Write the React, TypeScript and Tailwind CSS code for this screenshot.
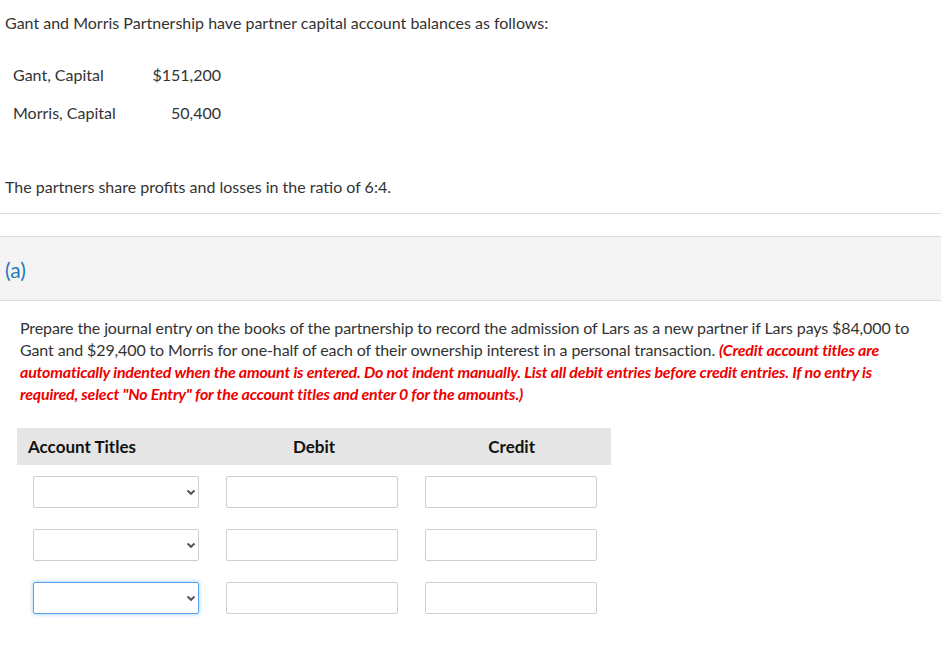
import React from 'react';

const balances = [
  { name: 'Gant, Capital', amount: '$151,200' },
  { name: 'Morris, Capital', amount: '50,400' },
];

const rows = [0, 1, 2];

const Chevron = () => (
  <svg width="10" height="10" viewBox="0 0 10 10" className="text-[#555]">
    <path d="M1.5 3.5 L5 6.8 L8.5 3.5" fill="none" stroke="currentColor" strokeWidth="2" />
  </svg>
);

export default function App() {
  return (
    <div className="min-h-screen bg-white text-[#333] text-[16px] leading-[22px]" style={{ fontFamily: 'Lato, "Open Sans", sans-serif' }}>
      <p className="px-[5px] pt-3">Gant and Morris Partnership have partner capital account balances as follows:</p>

      {/* capital balances */}
      <div className="mt-[30px] pl-[13px] flex flex-col gap-4">
        {balances.map((b) => (
          <div key={b.name} className="flex">
            <span className="w-[130px]">{b.name}</span>
            <span className="w-[78px] text-right">{b.amount}</span>
          </div>
        ))}
      </div>

      <p className="px-[5px] mt-[52px]">The partners share profits and losses in the ratio of 6:4.</p>

      <div className="mt-[15px] border-t border-[#dcdcdc]" />

      {/* part header */}
      <div className="mt-[22px] h-[65px] bg-[#f4f4f4] border-y border-[#dcdcdc] flex items-end pb-[18px] px-[5px]">
        <span className="text-[21px] leading-6 text-[#1f7bbd]">(a)</span>
      </div>

      <p className="pl-5 pr-5 mt-[16px] tracking-[-0.12px]">
        Prepare the journal entry on the books of the partnership to record the admission of Lars as a new partner if Lars pays $84,000 to Gant and $29,400 to Morris for one-half of each of their ownership interest in a personal transaction.{' '}
        <span className="font-bold italic text-[#ee0000] tracking-[-0.2px]">
          (Credit account titles are automatically indented when the amount is entered. Do not indent manually. List all debit entries before credit entries. If no entry is required, select "No Entry" for the account titles and enter 0 for the amounts.)
        </span>
      </p>

      {/* journal table */}
      <div className="ml-[17px] mt-[23px] w-[594px]">
        <div className="h-[37px] bg-[#e5e5e5] flex items-center font-bold text-[17px] text-[#111]">
          <div className="w-[199px] pl-[11px]">Account Titles</div>
          <div className="w-[197px] text-center">Debit</div>
          <div className="w-[199px] text-center">Credit</div>
        </div>
        <div className="flex flex-col gap-[21px] mt-[11px]">
          {rows.map((r) => (
            <div key={r} className="flex items-center pl-4">
              <div
                className={
                  r === 2
                    ? 'w-[166px] h-[32px] bg-white border border-[#5aa5e8] rounded-[2px] shadow-[0_0_4px_rgba(80,160,240,0.6)] flex items-center justify-end pr-[2px]'
                    : 'w-[166px] h-[32px] bg-white border border-[#cfcfcf] rounded-[2px] flex items-center justify-end pr-[2px]'
                }
              >
                <Chevron />
              </div>
              <div className="ml-[27px] w-[172px] h-[32px] border border-[#cfcfcf] rounded-[2px]" />
              <div className="ml-[27px] w-[172px] h-[32px] border border-[#cfcfcf] rounded-[2px]" />
            </div>
          ))}
        </div>
      </div>
    </div>
  );
}
